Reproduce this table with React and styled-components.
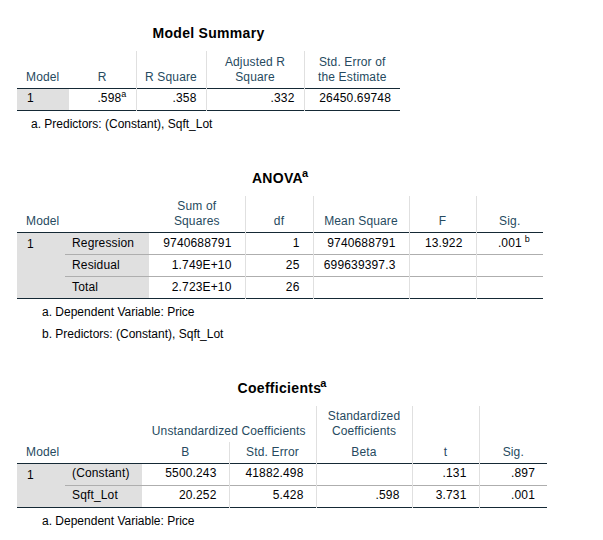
import React from 'react';
import styled, { createGlobalStyle } from 'styled-components';

const GlobalStyle = createGlobalStyle`
  html, body {
    margin: 0;
    padding: 0;
    background: #ffffff;
  }
  body {
    font-family: "Liberation Sans", Arial, sans-serif;
    font-size: 12px;
    color: #010205;
  }
`;

const Page = styled.div`
  display: flex;
  flex-direction: column;
  align-items: flex-start;
  gap: 33px;
  padding: 23px 0 0 17px;
`;

const Block = styled.section`
  width: ${p => p.$width}px;
`;

const Title = styled.div`
  text-align: center;
  font-weight: bold;
  font-size: 14px;
  letter-spacing: 0.3px;
  line-height: 20px;
  color: #000000;
  margin-bottom: 8px;

  sup {
    font-size: 11px;
    line-height: 0;
    vertical-align: 6px;
    letter-spacing: 0;
    margin-left: -1px;
  }
`;

const Table = styled.table`
  width: 100%;
  table-layout: fixed;
  border-collapse: collapse;
  border-bottom: 1px solid #152935;
  font-size: 12px;
  letter-spacing: 0.15px;

  tbody tr:first-child td {
    border-top: 1px solid #152935;
  }
  tbody tr + tr td {
    border-top: 1px solid #aeaeae;
  }
  td {
    padding-right: ${p => p.$pad}px;
  }
`;

const HeadRow = styled.tr`
  height: ${p => p.$h}px;
`;

const Th = styled.th`
  font-weight: normal;
  color: #264a60;
  line-height: 15px;
  text-align: ${p => (p.$left ? 'left' : 'center')};
  vertical-align: bottom;
  padding: 0 2px 3px ${p => (p.$left ? 9 : 2)}px;
  border-left: ${p => (p.$sep ? '1px solid #e0e0e0' : 'none')};
`;

const Row = styled.tr`
  height: 22px;
`;

const Td = styled.td`
  text-align: ${p => (p.$left ? 'left' : 'right')};
  vertical-align: ${p => (p.$top ? 'top' : 'middle')};
  padding-top: ${p => (p.$top ? 4 : 0)}px;
  padding-left: ${p => p.$indent ?? 4}px;
  background: ${p => (p.$gray ? '#e0e0e0' : 'transparent')};
  border-left: ${p => (p.$sep ? '1px solid #e0e0e0' : 'none')};
  white-space: nowrap;
  color: #010205;
  line-height: 15px;

  sup {
    font-size: 9px;
    line-height: 0;
    vertical-align: 5px;
    margin-left: ${p => (p.$gap ? 3 : 0)}px;
  }
`;

const Notes = styled.div`
  margin-top: 2px;
`;

const Note = styled.div`
  line-height: 22px;
  padding-left: ${p => p.$indent}px;
  color: #010205;
  white-space: nowrap;
`;

function Cols({ widths }) {
  return (
    <colgroup>
      {widths.map((w, i) => (
        <col key={i} style={{ width: w }} />
      ))}
    </colgroup>
  );
}

function ModelSummary() {
  return (
    <Block $width={383}>
      <Title>Model Summary</Title>
      <Table $pad={9}>
        <Cols widths={[52, 67, 70, 98, 96]} />
        <thead>
          <HeadRow $h={37}>
            <Th $left>Model</Th>
            <Th>R</Th>
            <Th $sep>R Square</Th>
            <Th $sep>Adjusted R<br />Square</Th>
            <Th $sep>Std. Error of<br />the Estimate</Th>
          </HeadRow>
        </thead>
        <tbody>
          <Row>
            <Td $left $gray $indent={10}>1</Td>
            <Td>.598<sup>a</sup></Td>
            <Td $sep>.358</Td>
            <Td $sep>.332</Td>
            <Td $sep>26450.69748</Td>
          </Row>
        </tbody>
      </Table>
      <Notes>
        <Note $indent={14}>a. Predictors: (Constant), Sqft_Lot</Note>
      </Notes>
    </Block>
  );
}

const anovaRows = [
  ['Regression', '9740688791', '1', '9740688791', '13.922', '.001'],
  ['Residual', '1.749E+10', '25', '699639397.3', '', ''],
  ['Total', '2.723E+10', '26', '', '', ''],
];

function Anova() {
  return (
    <Block $width={526}>
      <Title>ANOVA<sup>a</sup></Title>
      <Table $pad={13}>
        <Cols widths={[48, 84, 96, 68, 96, 67, 67]} />
        <thead>
          <HeadRow $h={37}>
            <Th $left colSpan={2}>Model</Th>
            <Th>Sum of<br />Squares</Th>
            <Th $sep>df</Th>
            <Th $sep>Mean Square</Th>
            <Th $sep>F</Th>
            <Th $sep>Sig.</Th>
          </HeadRow>
        </thead>
        <tbody>
          {anovaRows.map((r, i) => (
            <Row key={r[0]}>
              {i === 0 && (
                <Td $left $gray $top $indent={10} rowSpan={3}>1</Td>
              )}
              <Td $left $gray $indent={7}>{r[0]}</Td>
              <Td>{r[1]}</Td>
              <Td $sep>{r[2]}</Td>
              <Td $sep>{r[3]}</Td>
              <Td $sep>{r[4]}</Td>
              <Td $sep $gap>
                {r[5]}
                {i === 0 && <sup>b</sup>}
              </Td>
            </Row>
          ))}
        </tbody>
      </Table>
      <Notes>
        <Note $indent={25}>a. Dependent Variable: Price</Note>
        <Note $indent={25}>b. Predictors: (Constant), Sqft_Lot</Note>
      </Notes>
    </Block>
  );
}

const coefRows = [
  ['(Constant)', '5500.243', '41882.498', '', '.131', '.897'],
  ['Sqft_Lot', '20.252', '5.428', '.598', '3.731', '.001'],
];

function Coefficients() {
  return (
    <Block $width={530}>
      <Title>Coefficients<sup>a</sup></Title>
      <Table $pad={12}>
        <Cols widths={[48, 77, 87, 87, 96, 67, 68]} />
        <thead>
          <HeadRow $h={36}>
            <Th $left colSpan={2} rowSpan={2}>Model</Th>
            <Th colSpan={2}>Unstandardized Coefficients</Th>
            <Th $sep>Standardized<br />Coefficients</Th>
            <Th $sep rowSpan={2}>t</Th>
            <Th $sep rowSpan={2}>Sig.</Th>
          </HeadRow>
          <HeadRow $h={21}>
            <Th>B</Th>
            <Th $sep>Std. Error</Th>
            <Th $sep>Beta</Th>
          </HeadRow>
        </thead>
        <tbody>
          {coefRows.map((r, i) => (
            <Row key={r[0]}>
              {i === 0 && (
                <Td $left $gray $top $indent={10} rowSpan={2}>1</Td>
              )}
              <Td $left $gray $indent={7}>{r[0]}</Td>
              <Td>{r[1]}</Td>
              <Td $sep>{r[2]}</Td>
              <Td $sep>{r[3]}</Td>
              <Td $sep>{r[4]}</Td>
              <Td $sep>{r[5]}</Td>
            </Row>
          ))}
        </tbody>
      </Table>
      <Notes>
        <Note $indent={25}>a. Dependent Variable: Price</Note>
      </Notes>
    </Block>
  );
}

export default function App() {
  return (
    <>
      <GlobalStyle />
      <Page>
        <ModelSummary />
        <Anova />
        <Coefficients />
      </Page>
    </>
  );
}
